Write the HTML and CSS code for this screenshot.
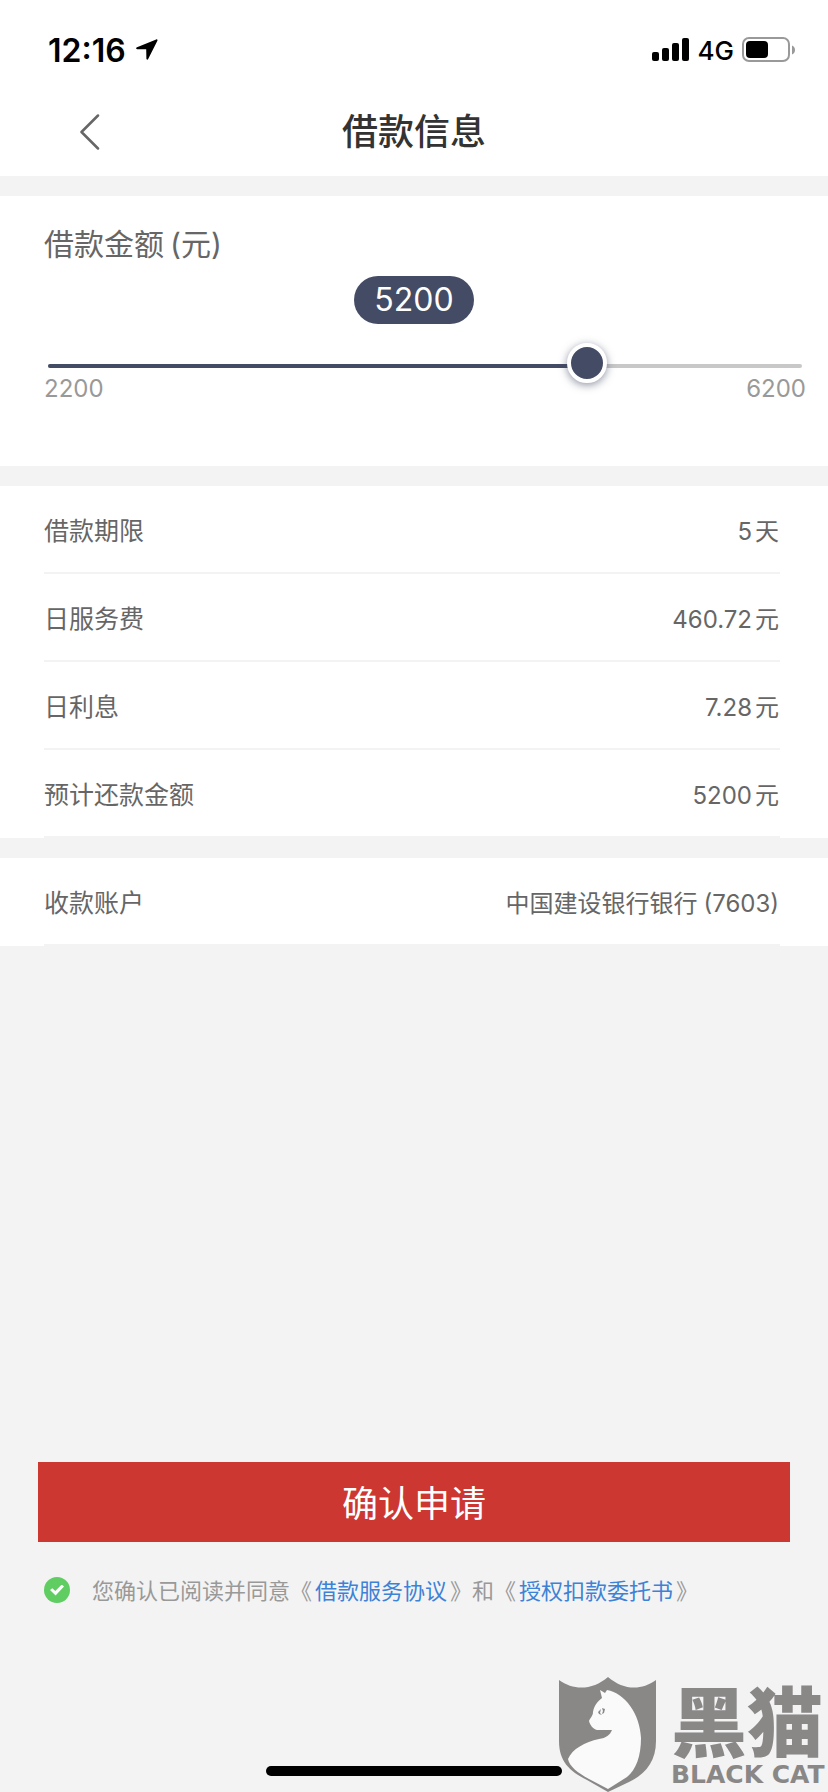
FILE: index.html
```
<!DOCTYPE html>
<html lang="zh-CN">
<head>
  <meta charset="UTF-8">
  <meta name="viewport" content="width=device-width, initial-scale=1.0">
  <title>借款信息</title>
  <link rel="stylesheet" href="styles.css">
</head>
<body>
  <header class="top">
    <div class="status-bar">
      <div class="status-left">
        <span class="time">12:16</span>
        <svg class="location" width="22" height="22" viewBox="0 0 22 22">
          <path d="M20.200.4 1 8.300c-1.400.6-1.100 1.900.2 1.900l9 .1.2 9.200c0 1.400 1.400 1.600 1.900.3L21.400 1.700c.4-1-.3-1.700-1.200-1.300z"/>
        </svg>
      </div>
      <div class="status-right">
        <svg width="38" height="24" viewBox="0 0 38 24">
          <rect x="0" y="14" width="7" height="9" rx="2"/>
          <rect x="10" y="10" width="7" height="13" rx="2"/>
          <rect x="20" y="5" width="7" height="18" rx="2"/>
          <rect x="30" y="0" width="7" height="23" rx="2"/>
        </svg>
        <span class="network">4G</span>
        <svg width="54" height="26" viewBox="0 0 54 26">
          <rect x="1" y="1" width="46" height="23" rx="6" fill="none" stroke="#999" stroke-width="2"/>
          <rect x="4" y="4" width="22" height="17" rx="4"/>
          <path d="M50 8.500c4 1.500 4 7.500 0 9z" fill="#999"/>
        </svg>
      </div>
    </div>
    <div class="nav-bar">
      <button class="back" type="button" aria-label="返回">
        <svg width="20" height="36" viewBox="0 0 20 36">
          <path d="M18 1.500 1.500 18 18 34.500" fill="none" stroke="#666" stroke-width="2.500" stroke-linecap="round" stroke-linejoin="round"/>
        </svg>
      </button>
      <h1>借款信息</h1>
    </div>
  </header>

  <main>
    <section class="panel amount">
      <label class="amount-title" for="amount">借款金额<span class="unit">(元)</span></label>
      <output class="amount-value" id="amount-value" for="amount">5200</output>
      <div class="slider">
        <input type="range" id="amount" min="2200" max="6200" step="100" value="5200">
      </div>
      <div class="range">
        <span>2200</span>
        <span>6200</span>
      </div>
    </section>

    <dl class="panel details">
      <div class="row"><dt>借款期限</dt><dd>5天</dd></div>
      <div class="row"><dt>日服务费</dt><dd>460.72元</dd></div>
      <div class="row"><dt>日利息</dt><dd>7.28元</dd></div>
      <div class="row"><dt>预计还款金额</dt><dd>5200元</dd></div>
    </dl>

    <dl class="panel details">
      <div class="row"><dt>收款账户</dt><dd>中国建设银行银行<span class="unit">(7603)</span></dd></div>
    </dl>
  </main>

  <footer>
    <button class="submit" type="button">确认申请</button>
    <div class="agreement">
      <input type="checkbox" id="agree" checked>
      <label for="agree">您确认已阅读并同意《<a href="#">借款服务协议</a>》和《<a href="#">授权扣款委托书</a>》</label>
    </div>
    <div class="home-indicator"></div>
  </footer>

  <div class="watermark">
    <svg width="98" height="115" viewBox="0 0 98 115">
      <path fill="#8a8787" d="M0 3c15 11 34 10 49-3 15 13 33 14 48 3v61c0 20-10 33-27 41l-21 10-21-12C10 94 0 84 0 64z"/>
      <path fill="#fafafa" d="M41 13l5 3 2-3c18 3 33 24 34 48 0 18-5 32-14 39l-19 12-19-10C19 96 10 89 9 82c4-10 17-17 31-20 7-1 11-4 13-9H38c-4-1-7-5-8-9 1-3 4-5 4-9 1-6 4-10 9-14z"/>
      <path fill="#8a8787" d="M39 35l3-3-1 4 2 2-3-1zM43 31l3 1-1 4-2 1 1-3z"/>
    </svg>
    <div class="watermark-text">
      <span class="watermark-name">黑猫</span>
      <span class="watermark-sub">BLACK CAT</span>
    </div>
  </div>

  <script>
    const amount = document.getElementById('amount');
    const amountValue = document.getElementById('amount-value');

    // Keep the bubble and the filled part of the track in sync
    function updateAmount() {
      const fill = (amount.value - amount.min) / (amount.max - amount.min) * 100;
      amountValue.textContent = amount.value;
      amount.style.setProperty('--fill', `${fill}%`);
    }

    amount.addEventListener('input', updateAmount);
    updateAmount();
  </script>
</body>
</html>
```

FILE: styles.css
```
* {
  box-sizing: border-box;
}
body {
  font-family: Inter, "Noto Sans CJK SC", sans-serif;
  font-size: 24px;
  text-autospace: normal;
  margin: 0;
  min-height: 100vh;
  display: flex;
  flex-direction: column;
  position: relative;
  background-color: #f3f3f3;
  color: #666;
}
button {
  font-family: inherit;
  border: none;
  cursor: pointer;
}
.top {
  background-color: #fff;
}
.status-bar {
  display: flex;
  justify-content: space-between;
  align-items: center;
  height: 88px;
  padding: 12px 32px 0 48px;
  color: #000;
}
.status-left,
.status-right {
  display: flex;
  align-items: center;
  gap: 8px;
}
.status-left {
  gap: 10px;
}
.time {
  font-size: 32px;
  font-weight: 600;
}
.network {
  font-size: 26px;
  font-weight: 500;
}
.nav-bar {
  display: grid;
  grid-template-columns: 120px 1fr 120px;
  align-items: center;
  height: 88px;
}
.back {
  display: flex;
  justify-content: flex-end;
  padding: 12px 20px;
  background: none;
}
h1 {
  margin: 0;
  font-size: 36px;
  font-weight: 500;
  line-height: 48px;
  text-align: center;
  color: #333;
}
.panel {
  margin: 20px 0 0;
  background-color: #fff;
}
.amount {
  display: flex;
  flex-direction: column;
  padding: 24px 22px 65px 44px;
}
.amount-title {
  font-size: 30px;
  line-height: 48px;
}
.unit {
  margin-left: 6px;
}
.amount-value {
  align-self: center;
  width: 120px;
  margin: 8px 22px 19px 0;
  border-radius: 24px;
  background-color: #444b64;
  color: #fff;
  font-size: 32px;
  line-height: 48px;
  text-align: center;
}
.slider {
  display: grid;
  align-items: center;
  height: 46px;
  margin: 0 4px -12px;
}
.slider::before {
  content: '';
  grid-area: 1 / 1;
  height: 4px;
  border-radius: 2px;
  background-color: #c8c8c8;
}
.slider input {
  -webkit-appearance: none;
  appearance: none;
  grid-area: 1 / 1;
  height: 46px;
  margin: 0 22px 0 0;
  background: none;
}
.slider input::-webkit-slider-runnable-track {
  height: 4px;
  border-radius: 2px;
  background: linear-gradient(#444b64, #444b64) no-repeat 0 0 / var(--fill, 75%) 100%;
}
.slider input::-webkit-slider-thumb {
  -webkit-appearance: none;
  width: 40px;
  height: 40px;
  margin-top: -21px;
  border: 4px solid #fff;
  border-radius: 50%;
  background-color: #444b64;
  box-shadow: 0 2px 8px rgba(68, 75, 100, 0.6);
}
.range {
  display: flex;
  justify-content: space-between;
  line-height: 24px;
  color: #999;
}
.row {
  display: flex;
  justify-content: space-between;
  align-items: center;
  height: 88px;
  margin: 0 48px 0 44px;
  border-bottom: 2px solid #f3f3f3;
}
.row dt {
  font-size: 25px;
}
.row dd {
  margin: 0;
  padding-right: 1px;
}
footer {
  display: flex;
  flex-direction: column;
  margin-top: auto;
  padding: 40px 38px 16px;
}
.submit {
  height: 80px;
  padding-bottom: 4px;
  background-color: #cc3731;
  color: #fff;
  font-size: 36px;
}
.agreement {
  display: flex;
  align-items: center;
  gap: 22px;
  height: 32px;
  margin: 32px 6px 160px;
  font-size: 22px;
  color: #999;
}
.agreement label {
  padding-bottom: 3px;
}
.agreement input {
  -webkit-appearance: none;
  appearance: none;
  display: grid;
  place-items: center;
  width: 26px;
  height: 26px;
  margin: 0;
  border-radius: 50%;
  background-color: #ccc;
}
.agreement input:checked {
  background-color: #5fcd61;
}
.agreement input:checked::before {
  content: '';
  width: 14px;
  height: 11px;
  background-color: #fff;
  clip-path: polygon(0 50%, 16% 34%, 38% 58%, 84% 0, 100% 18%, 40% 100%);
}
.agreement a {
  margin: 0 3px;
  color: #3c82d6;
  text-decoration: none;
}
.home-indicator {
  align-self: center;
  width: 296px;
  height: 10px;
  border-radius: 5px;
  background-color: #000;
}
.watermark {
  position: absolute;
  right: 0;
  bottom: 0;
  display: flex;
  gap: 14px;
  color: #8a8787;
}
.watermark-text {
  display: flex;
  flex-direction: column;
  width: 157px;
}
.watermark-name {
  font-family: "Noto Sans CJK SC", sans-serif;
  font-size: 76px;
  font-weight: 900;
  line-height: 82px;
}
.watermark-sub {
  font-family: "DejaVu Sans", sans-serif;
  font-size: 25px;
  font-weight: 700;
  line-height: 32px;
  white-space: nowrap;
}
```
